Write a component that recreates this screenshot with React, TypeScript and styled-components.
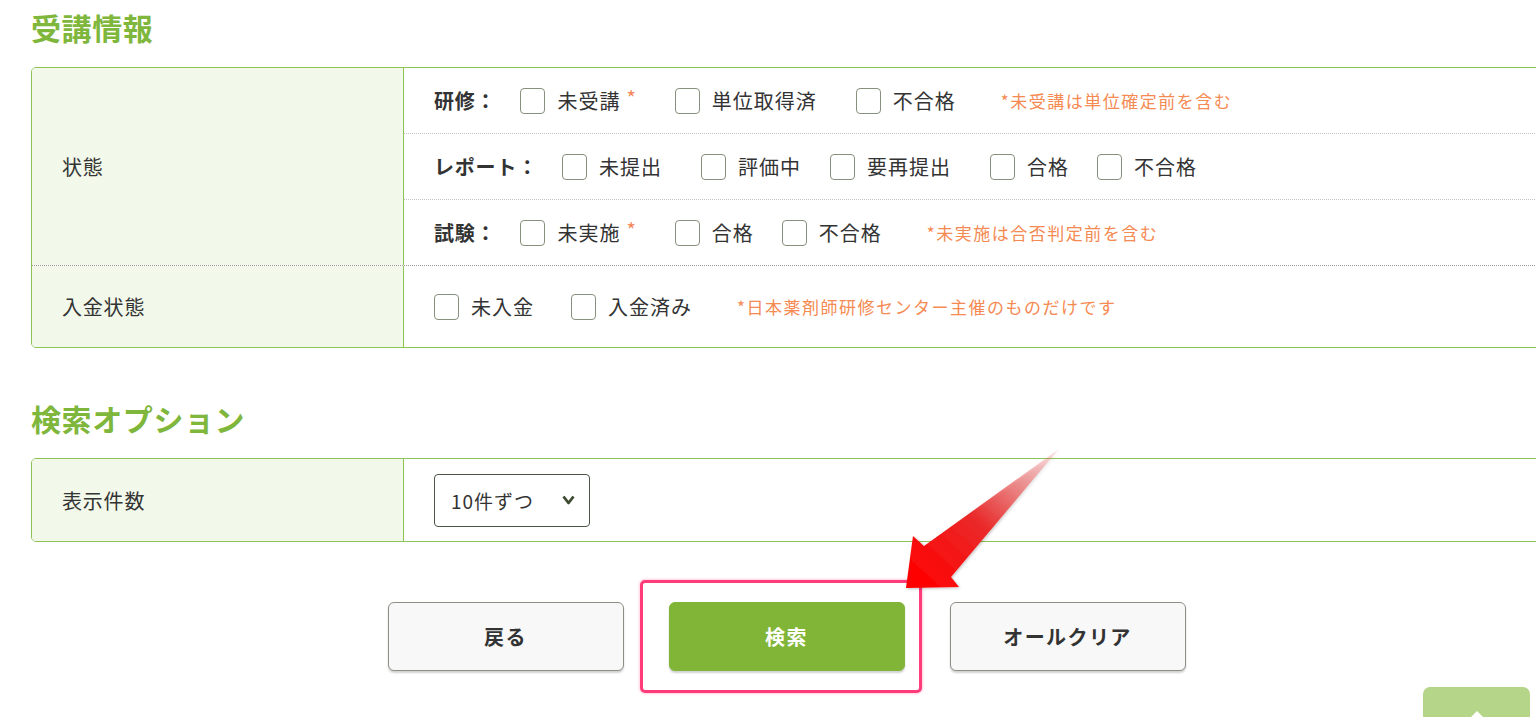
import React from "react";
import styled, { createGlobalStyle } from "styled-components";

const GlobalStyle = createGlobalStyle`
  html { overflow: hidden; }
  html, body { margin: 0; padding: 0; background: #fff; }
  body { font-family: "Noto Sans CJK JP", "Noto Sans", sans-serif; color: #333; }
  * { box-sizing: border-box; }
`;

const Page = styled.div`
  width: 1511px;
  margin-left: 31px;
  padding-top: 5px;
  padding-bottom: 60px;
`;

const Heading = styled.h2<{ $top?: number }>`
  margin: ${(p) => p.$top ?? 0}px 0 17px 0;
  font-size: 30px;
  line-height: 45px;
  font-weight: 700;
  letter-spacing: 0.6px;
  color: #7fb63c;
`;

const Table = styled.div`
  border: 1px solid #8dc455;
  border-radius: 5px;
  overflow: hidden;
`;

const Row = styled.div<{ $h?: number }>`
  display: grid;
  grid-template-columns: 372px 1fr;
  min-height: ${(p) => p.$h ?? 66}px;
  & + & { border-top: 1px dotted #9a9a9a; }
`;

const HeadCell = styled.div`
  background: #f2f8ea;
  border-right: 1px solid #8dc455;
  display: flex;
  align-items: center;
  padding-left: 30px;
  font-size: 20px;
  letter-spacing: 0.8px;
  color: #333;
`;

const BodyCell = styled.div`
  display: flex;
  flex-direction: column;
`;

const SubRow = styled.div<{ $h?: number }>`
  height: ${(p) => p.$h ?? 66}px;
  display: flex;
  align-items: center;
  padding-left: 30px;
  & + & { border-top: 1px dotted #c4c4c4; }
`;

const SubLabel = styled.span<{ $mr: number }>`
  font-size: 20px;
  font-weight: 700;
  letter-spacing: 0.8px;
  margin-right: ${(p) => p.$mr}px;
  color: #333;
`;

const Option = styled.label<{ $mr: number }>`
  display: flex;
  align-items: center;
  margin-right: ${(p) => p.$mr}px;
  cursor: pointer;
`;

const Box = styled.span`
  width: 25px;
  height: 26px;
  border: 1.5px solid #87917d;
  border-radius: 4px;
  background: #fff;
  margin-right: 12px;
  flex: none;
`;

const OptText = styled.span`
  font-size: 20px;
  letter-spacing: 1px;
  color: #333;
`;

const Star = styled.span`
  color: #f4865a;
  font-size: 20px;
  line-height: 1;
  margin-left: 6px;
  position: relative;
  top: -3px;
`;

const Note = styled.span`
  font-size: 17px;
  letter-spacing: 1.5px;
  color: #f58a52;
`;

const Select = styled.div`
  width: 156px;
  height: 53px;
  border: 1px solid #4c5446;
  border-radius: 4px;
  display: flex;
  align-items: center;
  justify-content: space-between;
  padding: 0 14px 0 16px;
  font-size: 19px;
  letter-spacing: 1px;
  color: #333;
`;

const Buttons = styled.div`
  display: flex;
  justify-content: center;
  gap: 45px;
  margin-top: 60px;
`;

const Button = styled.button<{ $primary?: boolean }>`
  width: 236px;
  height: 69px;
  border-radius: 6px;
  border: 1px solid ${(p) => (p.$primary ? "#80b537" : "#8b8f84")};
  background: ${(p) => (p.$primary ? "#80b537" : "#f8f8f8")};
  color: ${(p) => (p.$primary ? "#fff" : "#333")};
  box-shadow: 0 2px 2px rgba(0, 0, 0, 0.18);
  font-family: "Noto Sans CJK JP", "Noto Sans", sans-serif;
  font-size: 20px;
  font-weight: 700;
  letter-spacing: 1.4px;
  cursor: pointer;
`;

const Spot = styled.div`
  position: relative;
`;

const Highlight = styled.div`
  position: absolute;
  left: -29px;
  top: -22px;
  width: 282px;
  height: 113px;
  border: 3px solid #ff3b7a;
  border-radius: 5px;
  box-shadow: 0 0 3px rgba(255, 59, 122, 0.5);
  pointer-events: none;
`;

const Arrow = styled.svg`
  position: absolute;
  left: 230px;
  top: -160px;
  overflow: visible;
  pointer-events: none;
`;

const TopButton = styled.div`
  position: fixed;
  left: 1423px;
  top: 687px;
  width: 107px;
  height: 60px;
  border-radius: 7px;
  background: #b5d589;
  display: flex;
  justify-content: center;
  padding-top: 24px;
`;

const Tri = styled.span`
  width: 0;
  height: 0;
  border-left: 9px solid transparent;
  border-right: 9px solid transparent;
  border-bottom: 9px solid #fff;
`;

type Opt = { label: string; star?: boolean; mr: number };

const CheckOption = ({ o }: { o: Opt }) => (
  <Option $mr={o.mr}>
    <Box />
    <OptText>{o.label}</OptText>
    {o.star && <Star>*</Star>}
  </Option>
);

export default function App() {
  const kenshu: Opt[] = [
    { label: "未受講", star: true, mr: 39 },
    { label: "単位取得済", mr: 39 },
    { label: "不合格", mr: 45 },
  ];
  const report: Opt[] = [
    { label: "未提出", mr: 39 },
    { label: "評価中", mr: 29 },
    { label: "要再提出", mr: 39 },
    { label: "合格", mr: 28 },
    { label: "不合格", mr: 0 },
  ];
  const shiken: Opt[] = [
    { label: "未実施", star: true, mr: 39 },
    { label: "合格", mr: 28 },
    { label: "不合格", mr: 45 },
  ];
  const nyukin: Opt[] = [
    { label: "未入金", mr: 37 },
    { label: "入金済み", mr: 45 },
  ];

  return (
    <>
      <GlobalStyle />
      <Page>
        <Heading>受講情報</Heading>
        <Table>
          <Row $h={197}>
            <HeadCell>状態</HeadCell>
            <BodyCell>
              <SubRow $h={65}>
                <SubLabel $mr={24}>研修：</SubLabel>
                {kenshu.map((o) => (
                  <CheckOption key={o.label} o={o} />
                ))}
                <Note>*未受講は単位確定前を含む</Note>
              </SubRow>
              <SubRow>
                <SubLabel $mr={24}>レポート：</SubLabel>
                {report.map((o) => (
                  <CheckOption key={o.label} o={o} />
                ))}
              </SubRow>
              <SubRow>
                <SubLabel $mr={24}>試験：</SubLabel>
                {shiken.map((o) => (
                  <CheckOption key={o.label} o={o} />
                ))}
                <Note>*未実施は合否判定前を含む</Note>
              </SubRow>
            </BodyCell>
          </Row>
          <Row $h={81}>
            <HeadCell>入金状態</HeadCell>
            <BodyCell>
              <SubRow $h={81}>
                {nyukin.map((o) => (
                  <CheckOption key={o.label} o={o} />
                ))}
                <Note>*日本薬剤師研修センター主催のものだけです</Note>
              </SubRow>
            </BodyCell>
          </Row>
        </Table>

        <Heading $top={48}>検索オプション</Heading>
        <Table>
          <Row $h={82}>
            <HeadCell>表示件数</HeadCell>
            <BodyCell>
              <SubRow $h={82}>
                <Select>
                  <span>10件ずつ</span>
                  <svg width="13" height="10" viewBox="0 0 13 10">
                    <polyline
                      points="1.5,1.5 6.5,8 11.5,1.5"
                      fill="none"
                      stroke="#3c4a30"
                      strokeWidth="2.8"
                      strokeLinejoin="round"
                    />
                  </svg>
                </Select>
              </SubRow>
            </BodyCell>
          </Row>
        </Table>

        <Buttons>
          <Button>戻る</Button>
          <Spot>
            <Highlight />
            <Button $primary>検索</Button>
            <Arrow width="160" height="150" viewBox="0 0 160 150">
              <defs>
                <linearGradient id="arrowGrad" x1="0.05" y1="0.95" x2="1" y2="0">
                  <stop offset="0" stopColor="#ff0000" />
                  <stop offset="0.45" stopColor="#ea2a2a" />
                  <stop offset="1" stopColor="#e86a6a" stopOpacity="0.15" />
                </linearGradient>
                <filter id="arrowShadow" x="-20%" y="-20%" width="140%" height="140%">
                  <feDropShadow dx="1" dy="1" stdDeviation="1.5" floodColor="#000" floodOpacity="0.25" />
                </filter>
              </defs>
              <polygon
                points="7,146 14,94 25,104 160,7 52,135 60,145"
                fill="url(#arrowGrad)"
                filter="url(#arrowShadow)"
              />
            </Arrow>
          </Spot>
          <Button>オールクリア</Button>
        </Buttons>
      </Page>
      <TopButton>
        <Tri />
      </TopButton>
    </>
  );
}
